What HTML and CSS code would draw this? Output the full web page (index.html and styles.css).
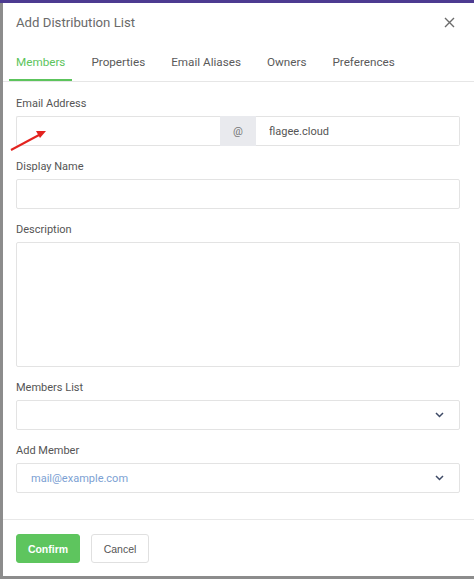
FILE: index.html
```html
<!DOCTYPE html>
<html>
<head>
    <meta charset="utf-8">
    <link rel="stylesheet" href="styles.css">
</head>
<body>
    <div class="backdrop">
        <div class="modal">
            <div class="modal-header">
                <h4 class="modal-title">Add Distribution List</h4>
                <button class="close-btn" aria-label="Close">
                    <svg width="11" height="11" viewBox="0 0 11 11">
                        <path d="M1 1 L10 10 M10 1 L1 10" stroke="#6b6b6b" stroke-width="1.4" fill="none"/>
                    </svg>
                </button>
            </div>

            <ul class="tabs">
                <li class="tab active">Members</li>
                <li class="tab">Properties</li>
                <li class="tab">Email Aliases</li>
                <li class="tab">Owners</li>
                <li class="tab">Preferences</li>
            </ul>

            <div class="modal-body">
                <div class="form-group">
                    <label>Email Address</label>
                    <div class="input-group">
                        <input class="form-control" type="text">
                        <span class="addon">@</span>
                        <input class="form-control domain" type="text" value="flagee.cloud">
                    </div>
                    <!-- annotation arrow from the screenshot -->
                    <svg class="arrow" width="44" height="28" viewBox="0 0 44 28">
                        <line x1="2" y1="24" x2="30" y2="9" stroke="#e3231f" stroke-width="2"/>
                        <polygon points="37,5 27,5 31,12" fill="#e3231f"/>
                    </svg>
                </div>

                <div class="form-group">
                    <label>Display Name</label>
                    <input class="form-control" type="text">
                </div>

                <div class="form-group">
                    <label>Description</label>
                    <textarea class="form-control textarea"></textarea>
                </div>

                <div class="form-group">
                    <label>Members List</label>
                    <div class="select">
                        <span class="select-value"></span>
                        <svg class="chevron" width="9" height="6" viewBox="0 0 9 6">
                            <path d="M1 1 L4.5 4.5 L8 1" stroke="#3e4a66" stroke-width="1.5" fill="none"/>
                        </svg>
                    </div>
                </div>

                <div class="form-group">
                    <label>Add Member</label>
                    <div class="select">
                        <span class="select-value placeholder">mail@example.com</span>
                        <svg class="chevron" width="9" height="6" viewBox="0 0 9 6">
                            <path d="M1 1 L4.5 4.5 L8 1" stroke="#3e4a66" stroke-width="1.5" fill="none"/>
                        </svg>
                    </div>
                </div>
            </div>

            <div class="modal-footer">
                <button class="btn btn-confirm">Confirm</button>
                <button class="btn btn-cancel">Cancel</button>
            </div>
        </div>
    </div>
</body>
</html>
```

FILE: styles.css
```css
*{
    margin: 0;
    padding: 0;
    box-sizing: border-box;
}
body {
    background-color: #8c8c8c;
    font-family: Roboto, "Noto Sans", sans-serif;
    color: #555;
}
.backdrop {
    border-top: 3px solid #4d3b91;
    padding-left: 3px;
    padding-bottom: 3px;
    height: 579px;
}
.modal {
    background-color: #fff;
    height: 573px;
    position: relative;
}
.modal-header {
    display: flex;
    align-items: center;
    justify-content: space-between;
    height: 38px;
    padding: 0 16px 0 13px;
}
.modal-title {
    font-size: 13.2px;
    font-weight: 400;
    color: #6a6a6a;
}
.close-btn {
    border: none;
    background: none;
    display: flex;
    margin-right: 3px;
}
.tabs {
    list-style: none;
    display: flex;
    gap: 12px;
    padding-left: 6px;
    border-bottom: 1px solid #e6e6e6;
    height: 41px;
}
.tab {
    padding: 4px 7px 0;
    font-size: 11.7px;
    color: #5a5a5a;
    line-height: 34px;
    height: 40px;
    border-bottom: 2px solid transparent;
}
.tab.active {
    color: #5cc45c;
    border-bottom-color: #5cc45c;
}
.modal-body {
    padding: 14px 14px 26px 13px;
}
.form-group {
    margin-bottom: 13px;
    position: relative;
}
.form-group:last-child {
    margin-bottom: 0;
}
.form-group label {
    display: block;
    font-size: 11px;
    line-height: 16px;
    color: #555;
    margin-bottom: 4px;
}
.form-control {
    display: block;
    width: 100%;
    height: 30px;
    border: 1px solid #e3e3e3;
    border-radius: 2px;
    padding: 0 13px;
    font-family: Roboto, "Noto Sans", sans-serif;
    font-size: 11px;
    color: #555;
    outline: none;
}
.textarea {
    height: 125px;
    resize: none;
}
.input-group {
    display: flex;
}
.input-group .form-control {
    flex: 1;
    width: auto;
    min-width: 0;
}
.input-group .form-control:first-child {
    border-right: none;
    border-radius: 2px 0 0 2px;
}
.input-group .domain {
    border-left: none;
    border-radius: 0 2px 2px 0;
}
.addon {
    width: 36px;
    background-color: #e9eaee;
    display: flex;
    align-items: center;
    justify-content: center;
    font-size: 11px;
    color: #777;
}
.arrow {
    position: absolute;
    left: -7px;
    top: 30px;
}
.select {
    display: flex;
    align-items: center;
    justify-content: space-between;
    height: 30px;
    border: 1px solid #e3e3e3;
    border-radius: 2px;
    padding: 0 14px;
}
.select-value {
    font-size: 11px;
}
.placeholder {
    color: #7c9fd3;
}
.chevron {
    margin-right: 1px;
}
.modal-footer {
    border-top: 1px solid #e8e8e8;
    padding: 14px 13px;
    display: flex;
    gap: 11px;
}
.btn {
    height: 29px;
    border-radius: 3px;
    font-size: 10.5px;
    font-family: "Liberation Sans", Arial, sans-serif;
    cursor: pointer;
}
.btn-confirm {
    width: 64px;
    background-color: #5ec55e;
    border: 1px solid #5ec55e;
    color: #fff;
    font-weight: bold;
}
.btn-cancel {
    width: 58px;
    background-color: #fff;
    border: 1px solid #e0e0e0;
    color: #555;
}
```
